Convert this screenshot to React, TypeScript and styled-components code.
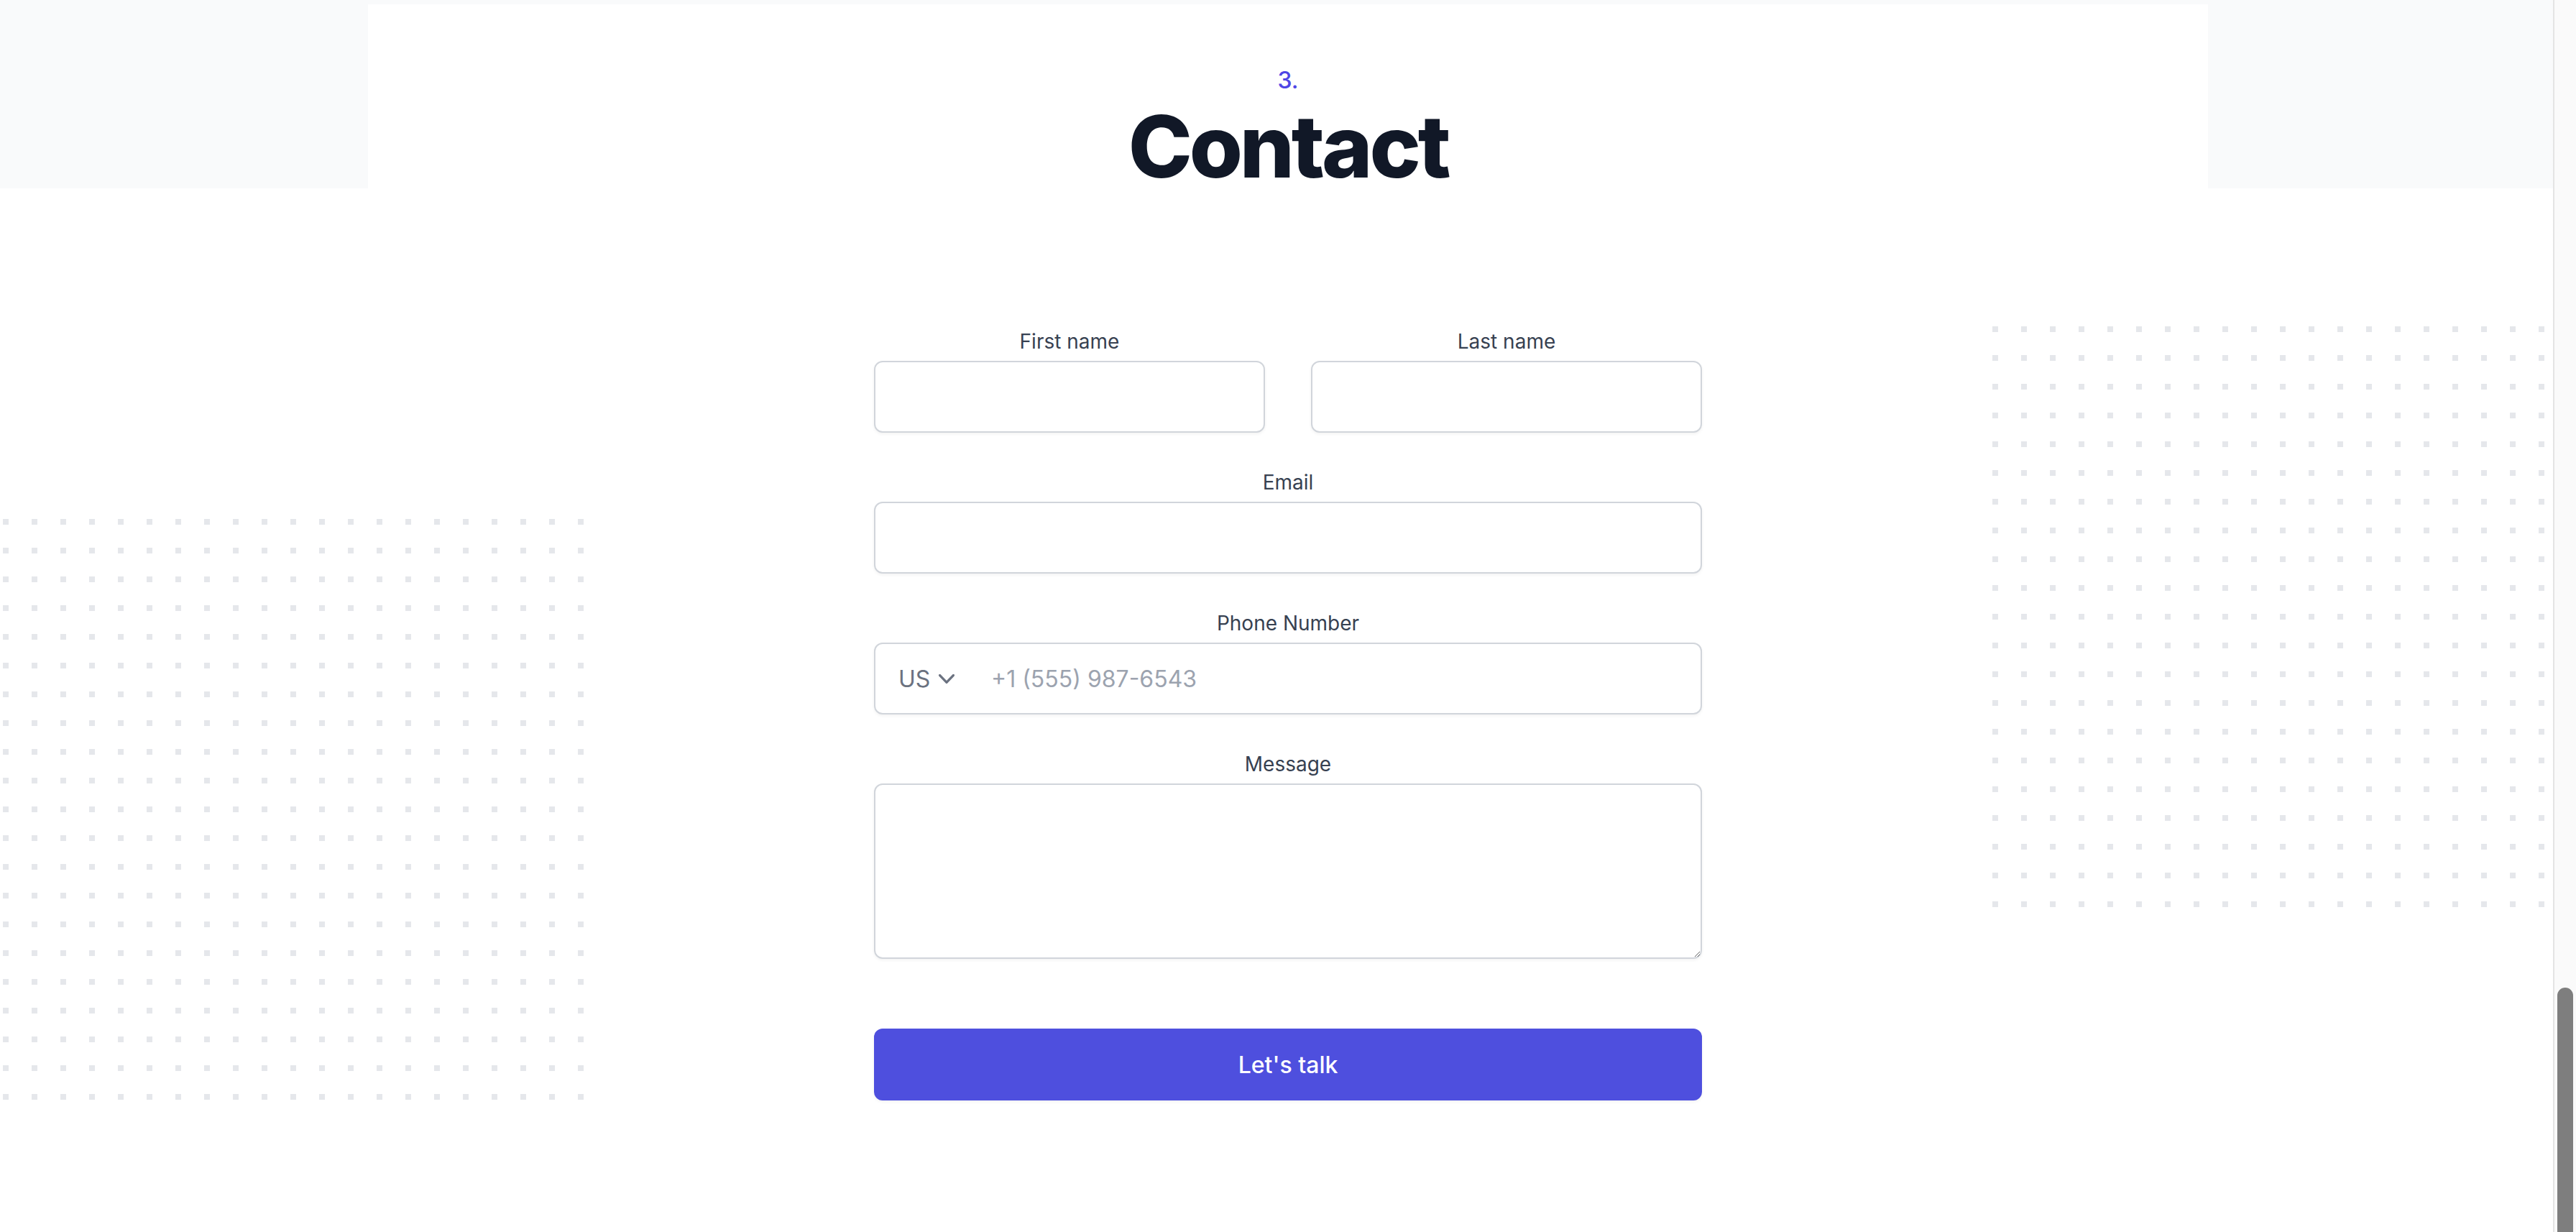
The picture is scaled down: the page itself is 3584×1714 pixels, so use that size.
import React from 'react';
import styled, { createGlobalStyle } from 'styled-components';

const GlobalStyle = createGlobalStyle`
  html, body {
    margin: 0;
    padding: 0;
    background: #ffffff;
  }
  body {
    font-family: Inter, "Noto Sans", sans-serif;
    -webkit-font-smoothing: antialiased;
  }
  * {
    box-sizing: border-box;
  }
`

const Page = styled.div`
  position: relative;
  min-height: 1714px;
  overflow: hidden;
  background: linear-gradient(to bottom, #f9fafb 0, #f9fafb 262px, #ffffff 262px);
`

const Dots = styled.svg<{ $left: number; $top: number }>`
  position: absolute;
  left: ${p => p.$left}px;
  top: ${p => p.$top}px;
  width: 808px;
  height: 808px;
  color: #e5e7eb;
`

const Section = styled.section`
  max-width: 2560px;
  margin: 6px auto 0;
  padding-top: 78px;
  background: #ffffff;
  display: flex;
  flex-direction: column;
  align-items: center;
`

const Eyebrow = styled.p`
  margin: 0;
  font-size: 32px;
  line-height: 56px;
  font-weight: 500;
  color: #4f46e5;
`

const Title = styled.h2`
  margin: 4px 0 0;
  font-size: 120px;
  line-height: 120px;
  font-weight: 800;
  letter-spacing: -0.035em;
  color: #111827;
`

const Form = styled.form`
  width: 1152px;
  margin-top: 191px;
  display: flex;
  flex-direction: column;
`

const Fields = styled.div`
  display: grid;
  grid-template-columns: 1fr 1fr;
  column-gap: 64px;
  row-gap: 49px;
`

const Field = styled.div<{ $full?: boolean }>`
  display: flex;
  flex-direction: column;
  gap: 7px;
  grid-column: ${p => (p.$full ? '1 / -1' : 'auto')};
`

const Label = styled.label`
  font-size: 28px;
  line-height: 40px;
  font-weight: 400;
  color: #374151;
  text-align: center;
`

const Box = styled.div`
  display: flex;
  align-items: center;
  height: 100px;
  border: 2px solid #d1d5db;
  border-radius: 12px;
  background: #ffffff;
  box-shadow: 0 2px 4px rgba(0, 0, 0, 0.05);
`

const Input = styled.input`
  width: 100%;
  height: 100%;
  border: 0;
  outline: none;
  background: transparent;
  padding: 0 28px;
  font-family: inherit;
  font-size: 32px;
  color: #111827;
  &::placeholder {
    color: #9ca3af;
  }
`

const Country = styled.div`
  display: flex;
  align-items: center;
  flex: none;
  width: 161px;
  height: 100%;
  padding-left: 32px;
  gap: 12px;
  font-size: 32px;
  color: #6b7280;
`

const PhoneInput = styled(Input)`
  padding-left: 0;
`

const TextArea = styled.textarea`
  width: 100%;
  height: 244px;
  border: 2px solid #d1d5db;
  border-radius: 12px;
  padding: 24px 28px;
  font-family: inherit;
  font-size: 32px;
  line-height: 48px;
  outline: none;
  resize: vertical;
  box-shadow: 0 2px 4px rgba(0, 0, 0, 0.05);
`

const Submit = styled.button`
  margin-top: 97px;
  height: 100px;
  width: 100%;
  border: 0;
  border-radius: 12px;
  background: #4e4fde;
  color: #ffffff;
  font-family: inherit;
  font-size: 32px;
  font-weight: 500;
  box-shadow: 0 2px 4px rgba(0, 0, 0, 0.05);
  cursor: pointer;
`

const ScrollTrack = styled.div`
  position: fixed;
  top: 0;
  right: 0;
  width: 32px;
  height: 100%;
  display: flex;
  flex-direction: column;
  padding-left: 4px;
  background: #fafafa;
  border-left: 2px solid #e4e4e4;
`

const ScrollThumb = styled.div`
  flex: 1;
  width: 22px;
  margin-top: 1374px;
  border-radius: 11px 11px 0 0;
  background: #7e7e7e;
`

const DotGrid: React.FC<{ id: string; left: number; top: number }> = ({ id, left, top }) => (
  <Dots $left={left} $top={top} viewBox="0 0 808 808" aria-hidden="true">
    <defs>
      <pattern id={id} x="0" y="0" width="40" height="40" patternUnits="userSpaceOnUse">
        <rect x="0" y="0" width="8" height="8" fill="currentColor" />
      </pattern>
    </defs>
    <rect width="808" height="808" fill={`url(#${id})`} />
  </Dots>
)

const Chevron = () => (
  <svg width="22" height="13" viewBox="5 7.2 10 5.6" fill="#6b7280" aria-hidden="true">
    <path d="M5.23 7.21a.75.75 0 011.06.02L10 11.168l3.71-3.938a.75.75 0 111.08 1.04l-4.25 4.5a.75.75 0 01-1.08 0l-4.25-4.5a.75.75 0 01.02-1.06z" />
  </svg>
)

const App: React.FC = () => {
  return (
    <>
      <GlobalStyle />
      <Page>
        <Section>
          <Eyebrow>3.</Eyebrow>
          <Title>Contact</Title>
          <Form onSubmit={e => e.preventDefault()}>
            <Fields>
              <Field>
                <Label htmlFor="first-name">First name</Label>
                <Box>
                  <Input id="first-name" type="text" />
                </Box>
              </Field>
              <Field>
                <Label htmlFor="last-name">Last name</Label>
                <Box>
                  <Input id="last-name" type="text" />
                </Box>
              </Field>
              <Field $full>
                <Label htmlFor="email">Email</Label>
                <Box>
                  <Input id="email" type="email" />
                </Box>
              </Field>
              <Field $full>
                <Label htmlFor="phone">Phone Number</Label>
                <Box>
                  <Country>
                    US
                    <Chevron />
                  </Country>
                  <PhoneInput id="phone" type="tel" placeholder="+1 (555) 987-6543" />
                </Box>
              </Field>
              <Field $full>
                <Label htmlFor="message">Message</Label>
                <TextArea id="message" />
              </Field>
            </Fields>
            <Submit type="submit">Let's talk</Submit>
          </Form>
        </Section>
        <DotGrid id="dots-left" left={4} top={722} />
        <DotGrid id="dots-right" left={2772} top={454} />
        <ScrollTrack>
          <ScrollThumb />
        </ScrollTrack>
      </Page>
    </>
  );
}

export default App;
